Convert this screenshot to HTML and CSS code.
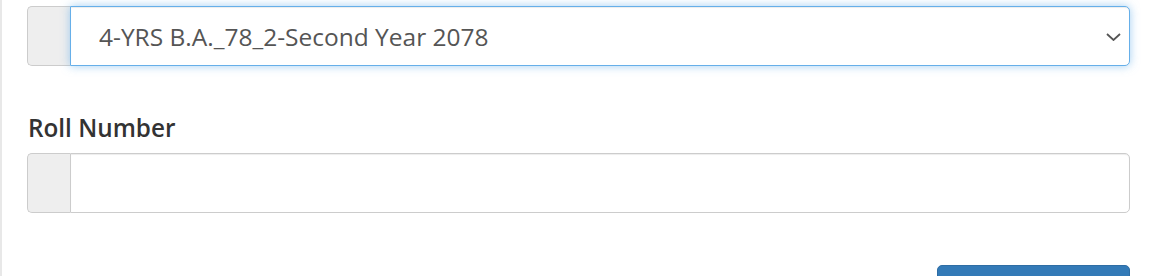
FILE: index.html
```html
<!DOCTYPE html>
<html>
<head>
	<title>Result Search</title>
	<meta charset="utf-8">
	<link rel="stylesheet" href="styles.css">
</head>
<body>
	<div class="panel">
		<div class="form-group first">
			<div class="input-group">
				<span class="addon"></span>
				<div class="select-wrap">
					<select class="control focused">
						<option>4-YRS B.A._78_2-Second Year 2078</option>
					</select>
					<svg class="chevron" width="15" height="8" viewBox="0 0 15 8">
						<path d="M1 1 L7.5 7 L14 1" fill="none" stroke="#555" stroke-width="1.8"/>
					</svg>
				</div>
			</div>
		</div>

		<div class="form-group">
			<label for="roll">Roll Number</label>
			<div class="input-group">
				<span class="addon"></span>
				<input id="roll" class="control" type="text">
			</div>
		</div>

		<div class="actions">
			<button class="btn">Search</button>
		</div>
	</div>
</body>
</html>
```

FILE: styles.css
```css
*{
	box-sizing: border-box;
}

body{
	margin: 0;
	background: #fff;
	font-family: 'Open Sans', sans-serif;
	color: #333;
	overflow: hidden;
}

.panel{
	border-left: 2px solid #e8e8e8;
	padding: 6px 21px 0 25px;
	height: 276px;
	overflow: hidden;
}

.form-group{
	margin-bottom: 52px;
}

.form-group.first{
	margin-bottom: 46px;
}

label{
	display: block;
	font-size: 24.3px;
	font-weight: 600;
	line-height: 32px;
	margin-bottom: 9px;
	padding-left: 1px;
}

.input-group{
	display: flex;
	height: 60px;
}

.addon{
	width: 43px;
	flex: none;
	background: #eee;
	border: 1px solid #ccc;
	border-right: none;
	border-radius: 5px 0 0 5px;
}

.select-wrap{
	position: relative;
	flex: 1;
	display: flex;
}

.control{
	flex: 1;
	height: 60px;
	margin: 0;
	padding: 0 28px;
	font-family: 'Open Sans', sans-serif;
	font-size: 24.5px;
	color: #555;
	background: #fff;
	border: 1px solid #ccc;
	border-radius: 0 5px 5px 0;
	box-shadow: inset 0 1px 1px rgba(0, 0, 0, .075);
	outline: none;
	appearance: none;
	-webkit-appearance: none;
}

.control.focused{
	border-color: #66afe9;
	box-shadow: inset 0 1px 1px rgba(0, 0, 0, .075), 0 0 10px rgba(102, 175, 233, .6);
}

.chevron{
	position: absolute;
	right: 9px;
	top: 27px;
}

.actions{
	display: flex;
	justify-content: flex-end;
}

.btn{
	width: 193px;
	height: 60px;
	padding: 26px 20px 0;
	font-family: 'Open Sans', sans-serif;
	font-size: 20px;
	line-height: 28px;
	color: #fff;
	background: #337ab7;
	border: 1px solid #2e6da4;
	border-radius: 5px;
}
```
